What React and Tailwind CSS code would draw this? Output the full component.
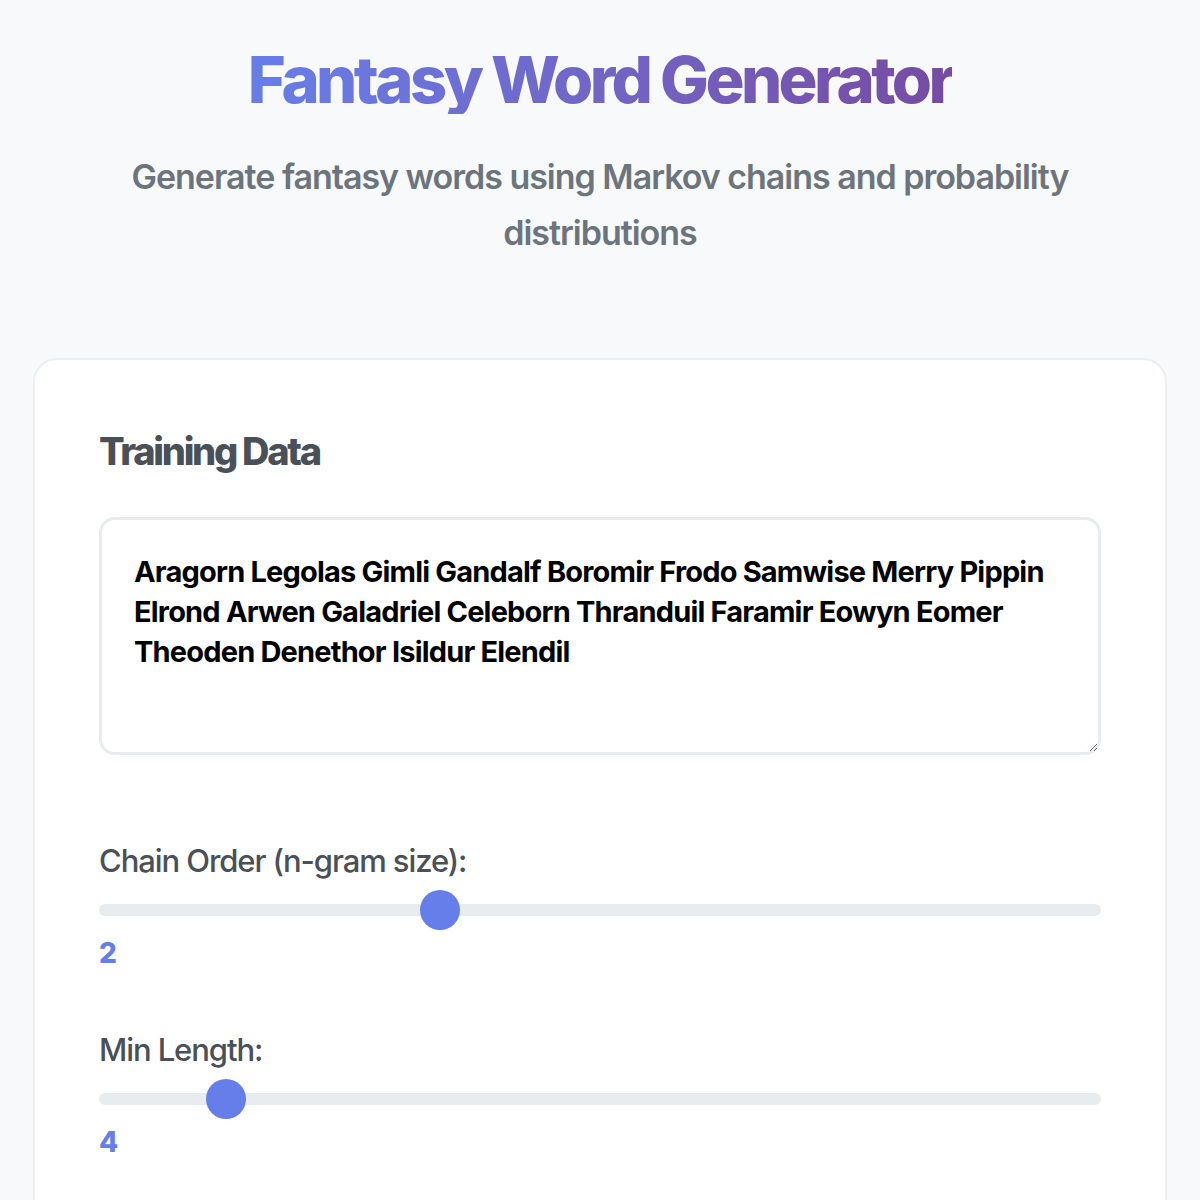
import { useState } from "react";

const font = { fontFamily: "Inter, 'Noto Sans', sans-serif" };

function RangeField({ label, value, min, max, onChange }) {
  const pct = (value - min) / (max - min);

  const handleClick = (e) => {
    const rect = e.currentTarget.getBoundingClientRect();
    const x = Math.min(Math.max(e.clientX - rect.left - 20, 0), rect.width - 40);
    const next = Math.round(min + (x / (rect.width - 40)) * (max - min));
    onChange(next);
  };

  return (
    <div className="mb-[61px]">
      <div className="text-[31px] font-medium text-[#495057] tracking-[-0.035em] leading-[40px] mb-[9px]">
        {label}
      </div>
      <div className="relative h-10 flex items-center cursor-pointer" onClick={handleClick}>
        <div className="w-full h-3 rounded-full bg-[#e9ecef]" />
        <div
          className="absolute top-0 w-10 h-10 rounded-full bg-[#667eea]"
          style={{ left: `calc(${pct} * (100% - 40px))` }}
        />
      </div>
      <div className="mt-[7px] text-[28px] font-extrabold text-[#667eea] leading-8">{value}</div>
    </div>
  );
}

export default function App() {
  const [text, setText] = useState(
    "Aragorn Legolas Gimli Gandalf Boromir Frodo Samwise Merry Pippin Elrond Arwen Galadriel Celeborn Thranduil Faramir Eowyn Eomer Theoden Denethor Isildur Elendil"
  );
  const [order, setOrder] = useState(2);
  const [minLength, setMinLength] = useState(4);

  return (
    <div className="min-h-screen bg-[#f8f9fa]" style={font}>
      <div className="px-[33px] pt-[46px]">
        <header className="text-center">
          <h1 className="text-[65px] leading-[68px] font-extrabold tracking-[-0.055em] bg-gradient-to-r from-[#667eea] to-[#764ba2] bg-clip-text text-transparent inline-block">
            Fantasy Word Generator
          </h1>
          <p className="mt-[35px] mx-auto max-w-[1000px] text-[34px] leading-[56px] font-semibold tracking-[-0.03em] text-[#6c757d]">
            Generate fantasy words using Markov chains and probability distributions
          </p>
        </header>

        <main className="mt-[97px] bg-white rounded-[24px] border-2 border-[#eceef0] px-[64px] pt-[67px] pb-10">
          <h2 className="text-[38px] leading-[48px] font-extrabold tracking-[-0.06em] text-[#495057] mb-[42px]">
            Training Data
          </h2>
          <textarea
            value={text}
            onChange={(e) => setText(e.target.value)}
            className="block w-full h-[238px] rounded-[16px] border-[3px] border-[#e9ecef] px-[32px] pt-[32px] text-[29px] leading-[40px] font-bold tracking-[-0.028em] text-black outline-none"
            style={font}
          />

          <div className="mt-[86px]">
            <RangeField label="Chain Order (n-gram size):" value={order} min={1} max={4} onChange={setOrder} />
            <RangeField label="Min Length:" value={minLength} min={2} max={20} onChange={setMinLength} />
          </div>
        </main>
      </div>
    </div>
  );
}
